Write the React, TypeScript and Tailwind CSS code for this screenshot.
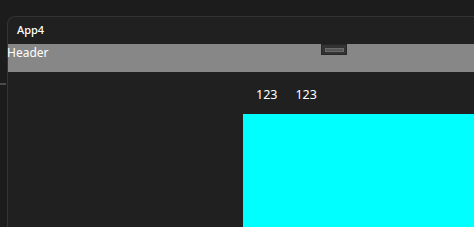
export default function App() {
  return (
    <div className="w-[474px] h-[227px] bg-[#1c1c1c] overflow-hidden relative" style={{ fontFamily: '"Noto Sans", "Open Sans", sans-serif' }}>
      <div className="absolute left-0 top-[83px] w-[6px] h-[2px] bg-[#4a4a4a]" />
      <div className="ml-[7px] mt-[16px] h-[211px] rounded-tl-[8px] border-l border-t border-[#333333] bg-[#202020] flex flex-col">
        <div className="h-[27px] pl-[9px] flex items-center text-[11px] font-medium text-white">App4</div>
        <div className="h-[28px] bg-[#878787] relative flex items-start">
          <span className="text-[12px] leading-[16px] text-white pt-[1px] -ml-[1px]">Header</span>
          <div className="absolute left-[313px] top-0 w-[26px] h-[11px] bg-[#333333] border border-[#262626] flex items-center justify-center">
            <div className="w-[19px] h-[4px] bg-[#555555] border border-[#6a6a6a]" />
          </div>
        </div>
        <div className="flex gap-[18px] pl-[248px] pt-[14px] h-[42px] text-[12.5px] text-white">
          <span>123</span>
          <span>123</span>
        </div>
        <div className="flex flex-1">
          <div className="w-[235px]" />
          <div className="flex-1 bg-[#00ffff]" />
        </div>
      </div>
    </div>
  );
}
